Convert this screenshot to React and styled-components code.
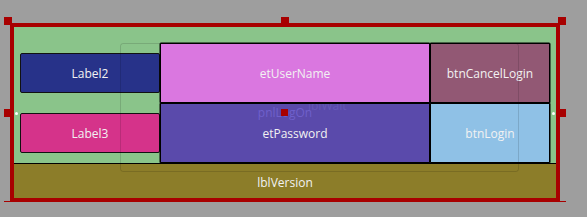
import React from "react";
import styled, { createGlobalStyle } from "styled-components";

const GlobalStyle = createGlobalStyle`
	body {
		margin: 0;
		background: #9e9e9e;
		font-family: "Open Sans", "DejaVu Sans", sans-serif;
	}
`;

const Frame = styled.div`
	position: relative;
	box-sizing: border-box;
	width: 550px;
	height: 179px;
	margin: 23px 0 0 10px;
	border: 4px solid #a80000;
	display: flex;
	flex-direction: column;
`;

const Panel = styled.div`
	background: #8ac48a;
	padding: 16px 6px 0 6px;
	display: flex;
`;

const Grid = styled.div`
	display: grid;
	grid-template-columns: 140px 270px 120px;
	grid-template-rows: 60px 60px;
`;

const LabelCell = styled.div`
	display: flex;
	align-items: center;
`;

const LabelBox = styled.div`
	box-sizing: border-box;
	width: 100%;
	height: 40px;
	background: ${(p) => p.bg};
	border: 1px solid #111;
	border-radius: 2px;
	display: flex;
	align-items: center;
	justify-content: center;
	color: #f2f2f2;
	font-size: 12px;
`;

const Control = styled.div`
	position: relative;
	overflow: hidden;
	box-sizing: border-box;
	background: ${(p) => p.bg};
	border: 1px solid #000;
	box-shadow: 0 0 0 0.5px #000;
	border-radius: 1px;
	display: flex;
	align-items: center;
	justify-content: center;
	color: #f2f2f2;
	font-size: 12px;
`;

const Version = styled.div`
	flex: 1;
	background: #8c7d29;
	display: flex;
	align-items: center;
	justify-content: center;
	color: #f2f2f2;
	font-size: 12px;
	padding-top: 3px;
	border-top: 1px solid #000;
`;

const GhostPanel = styled.div`
	position: absolute;
	left: 106px;
	top: 16px;
	width: 399px;
	height: 129px;
	box-sizing: border-box;
	border: 1px solid rgba(0, 0, 0, 0.13);
	border-radius: 3px;
	pointer-events: none;
`;

const GhostText = styled.div`
	position: absolute;
	left: 50%;
	top: 50%;
	transform: translate(-50%, -50%);
	margin-top: 0;
	color: rgba(118, 104, 214, 0.75);
	font-size: 12px;
	line-height: 14px;
`;

const WaitText = styled.div`
	position: absolute;
	left: 147px;
	top: -7px;
	color: rgba(120, 108, 200, 0.45);
	font-size: 12px;
`;

const Handle = styled.div`
	position: absolute;
	width: 8px;
	height: 8px;
	background: #a80000;
	${(p) => p.pos}
`;

const Dot = styled.div`
	position: absolute;
	top: 85px;
	width: 3px;
	height: 3px;
	border-radius: 50%;
	background: #fff;
	${(p) => p.pos}
`;

const handles = [
	"left:-10px;top:-10px;",
	"left:50%;margin-left:-4px;top:-10px;",
	"right:-10px;top:-10px;",
	"left:-10px;top:50%;margin-top:-4px;",
	"right:-10px;top:50%;margin-top:-4px;",
	"left:-10px;bottom:-11px;",
	"left:50%;margin-left:-4px;bottom:-11px;",
	"right:-10px;bottom:-11px;",
	"left:50%;margin-left:-4px;top:50%;margin-top:-4px;width:7px;height:7px;",
];

export default function App() {
	return (
		<>
			<GlobalStyle />
			<Frame>
				<Panel>
					<Grid>
						<LabelCell>
							<LabelBox bg="#273289">Label2</LabelBox>
						</LabelCell>
						<Control bg="#da77e0">etUserName</Control>
						<Control bg="#925874">btnCancelLogin</Control>
						<LabelCell>
							<LabelBox bg="#d5338a">Label3</LabelBox>
						</LabelCell>
						<Control bg="#5a4aab">
							<WaitText>lblWait</WaitText>
							etPassword
						</Control>
						<Control bg="#8fc1e6">btnLogin</Control>
					</Grid>
				</Panel>
				<Version>lblVersion</Version>
				<GhostPanel />
				<GhostText>pnlLogOn</GhostText>
				<Dot pos="left:1px;" />
				<Dot pos="right:1px;" />
				{handles.map((pos, i) => (
					<Handle key={i} pos={pos} />
				))}
			</Frame>
		</>
	);
}
